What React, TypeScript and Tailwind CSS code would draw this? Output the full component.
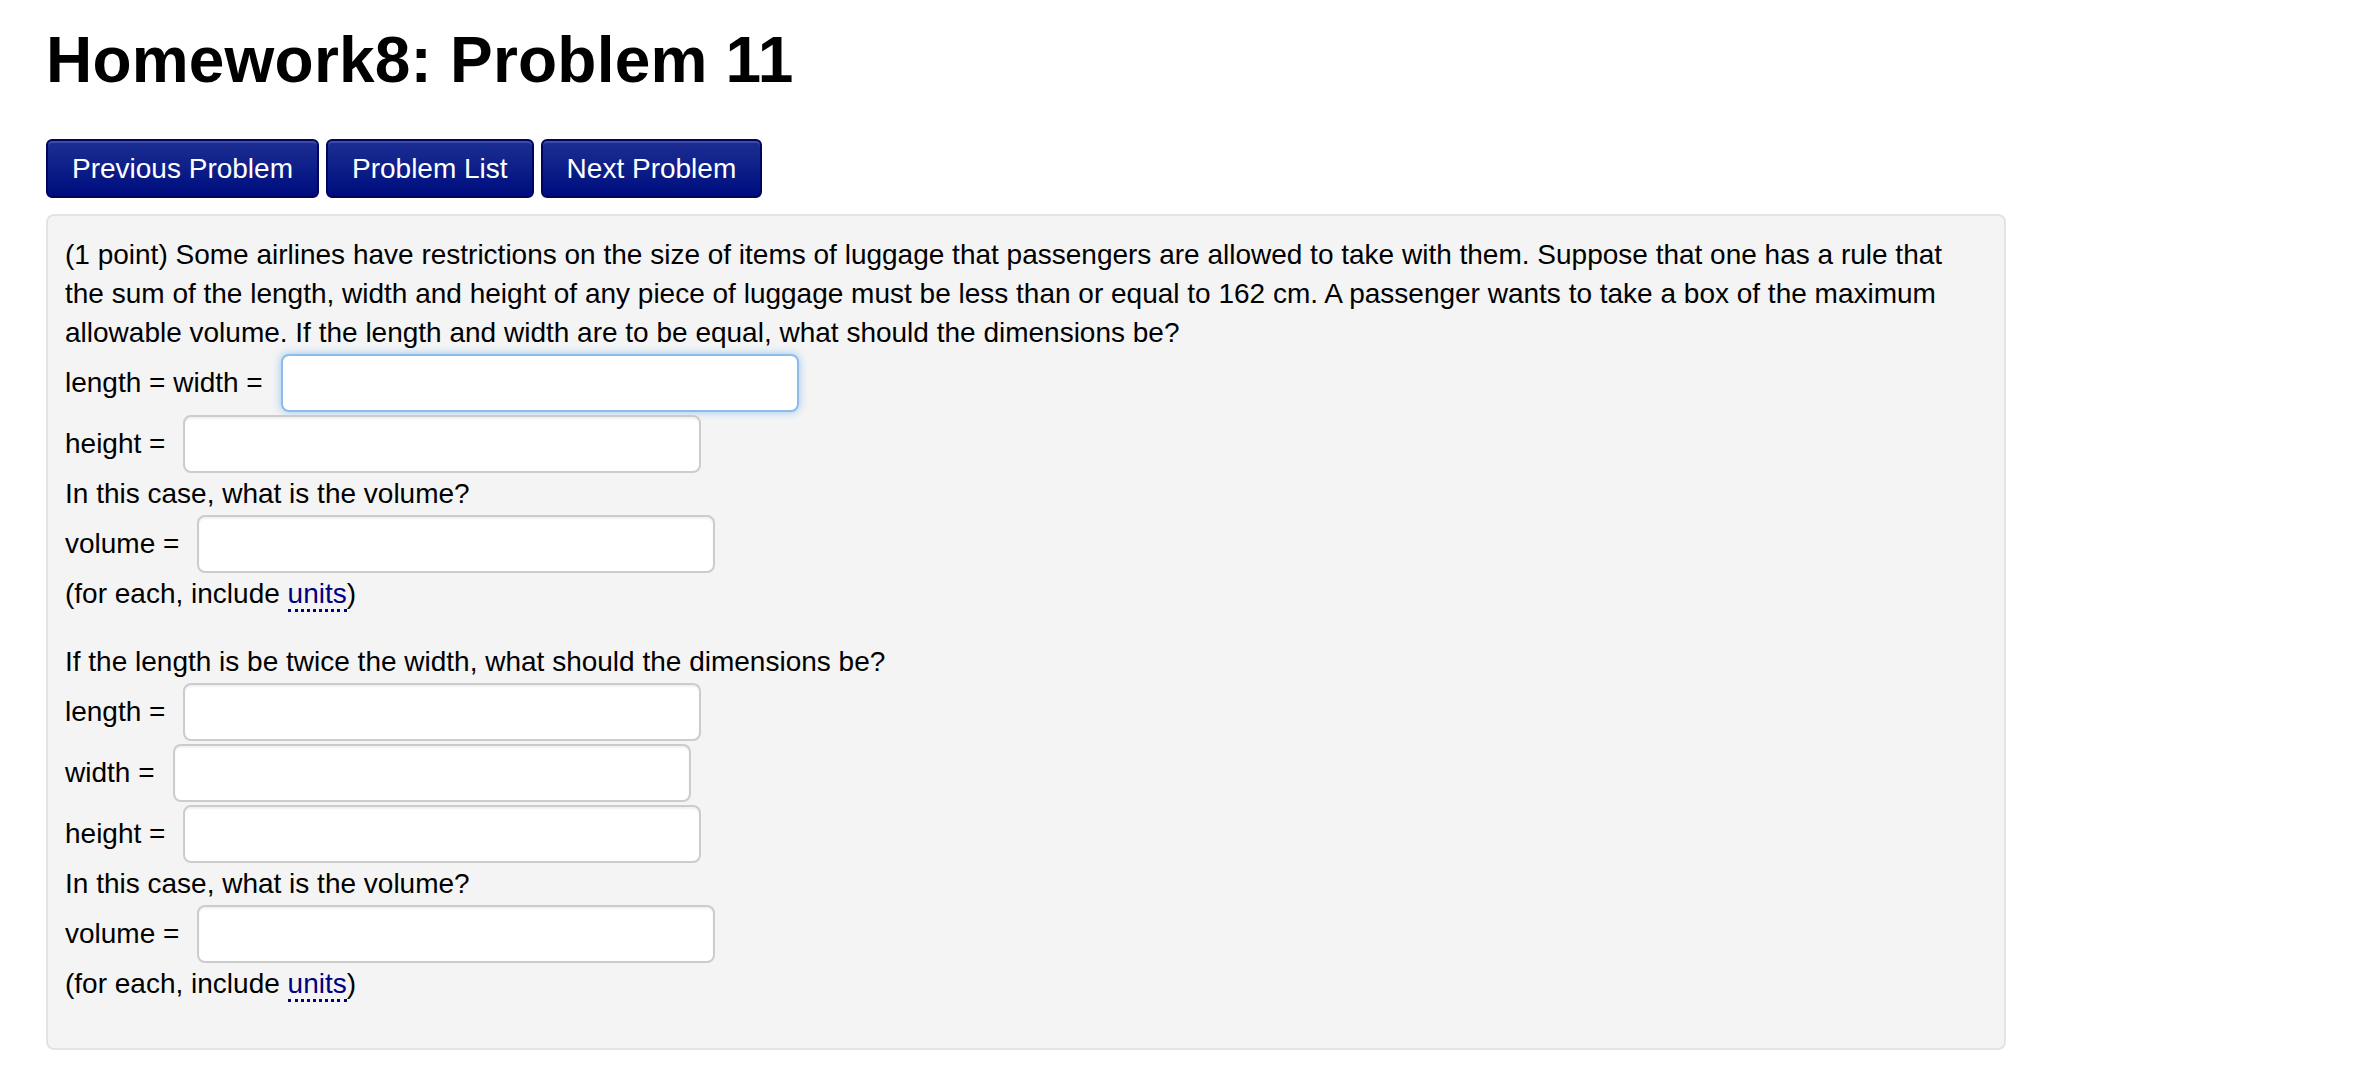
import React from 'react';

const Field: React.FC<{ label: string; focused?: boolean }> = ({ label, focused }) => (
  <div className="flex h-[61px] items-center">
    <span className="mr-[18px]">{label}</span>
    <input
      type="text"
      autoFocus={focused}
      className={`w-[518px] h-[58px] rounded-[8px] bg-white px-3 outline-none ${
        focused
          ? 'border-2 border-[#8fbbe8] shadow-[0_0_8px_rgba(82,168,236,0.6)]'
          : 'border-2 border-[#cccccc] shadow-[inset_0_2px_2px_rgba(0,0,0,0.06)]'
      }`}
    />
  </div>
);

const Units: React.FC = () => (
  <p className="h-[39px]">
    (for each, include{' '}
    <span className="text-[#000080] border-b-[3px] border-dotted border-[#000080]">units</span>)
  </p>
);

export default function App() {
  return (
    <div className="min-h-screen bg-white text-black font-['Liberation_Sans',Arial,sans-serif]">
      <div className="pl-[46px] pt-[22px]">
        <h1 className="text-[64px] font-bold leading-[76px] tracking-[0.2px]">Homework8: Problem 11</h1>

        <div className="mt-[41px] flex gap-[7px]">
          {['Previous Problem', 'Problem List', 'Next Problem'].map((t) => (
            <button
              key={t}
              className="h-[59px] rounded-[6px] border-2 border-[#00065e] bg-gradient-to-b from-[#1d2d93] to-[#000a7e] px-[24px] text-[28px] text-white shadow-[inset_0_2px_0_rgba(255,255,255,0.15)]"
            >
              {t}
            </button>
          ))}
        </div>

        <div className="mt-[16px] w-[1960px] rounded-[8px] border-2 border-[#e3e3e3] bg-[#f4f4f4] pl-[17px] pr-[16px] pt-[19px] pb-[45px] text-[28px] leading-[39px]">
          <p>
            (1 point) Some airlines have restrictions on the size of items of luggage that passengers are allowed to take with them. Suppose that one has a rule that
            <br />
            the sum of the length, width and height of any piece of luggage must be less than or equal to 162 cm. A passenger wants to take a box of the maximum
            <br />
            allowable volume. If the length and width are to be equal, what should the dimensions be?
          </p>
          <Field label="length = width =" focused />
          <Field label="height =" />
          <p>In this case, what is the volume?</p>
          <Field label="volume =" />
          <Units />

          <p className="mt-[29px]">If the length is be twice the width, what should the dimensions be?</p>
          <Field label="length =" />
          <Field label="width =" />
          <Field label="height =" />
          <p>In this case, what is the volume?</p>
          <Field label="volume =" />
          <Units />
        </div>
      </div>
    </div>
  );
}
